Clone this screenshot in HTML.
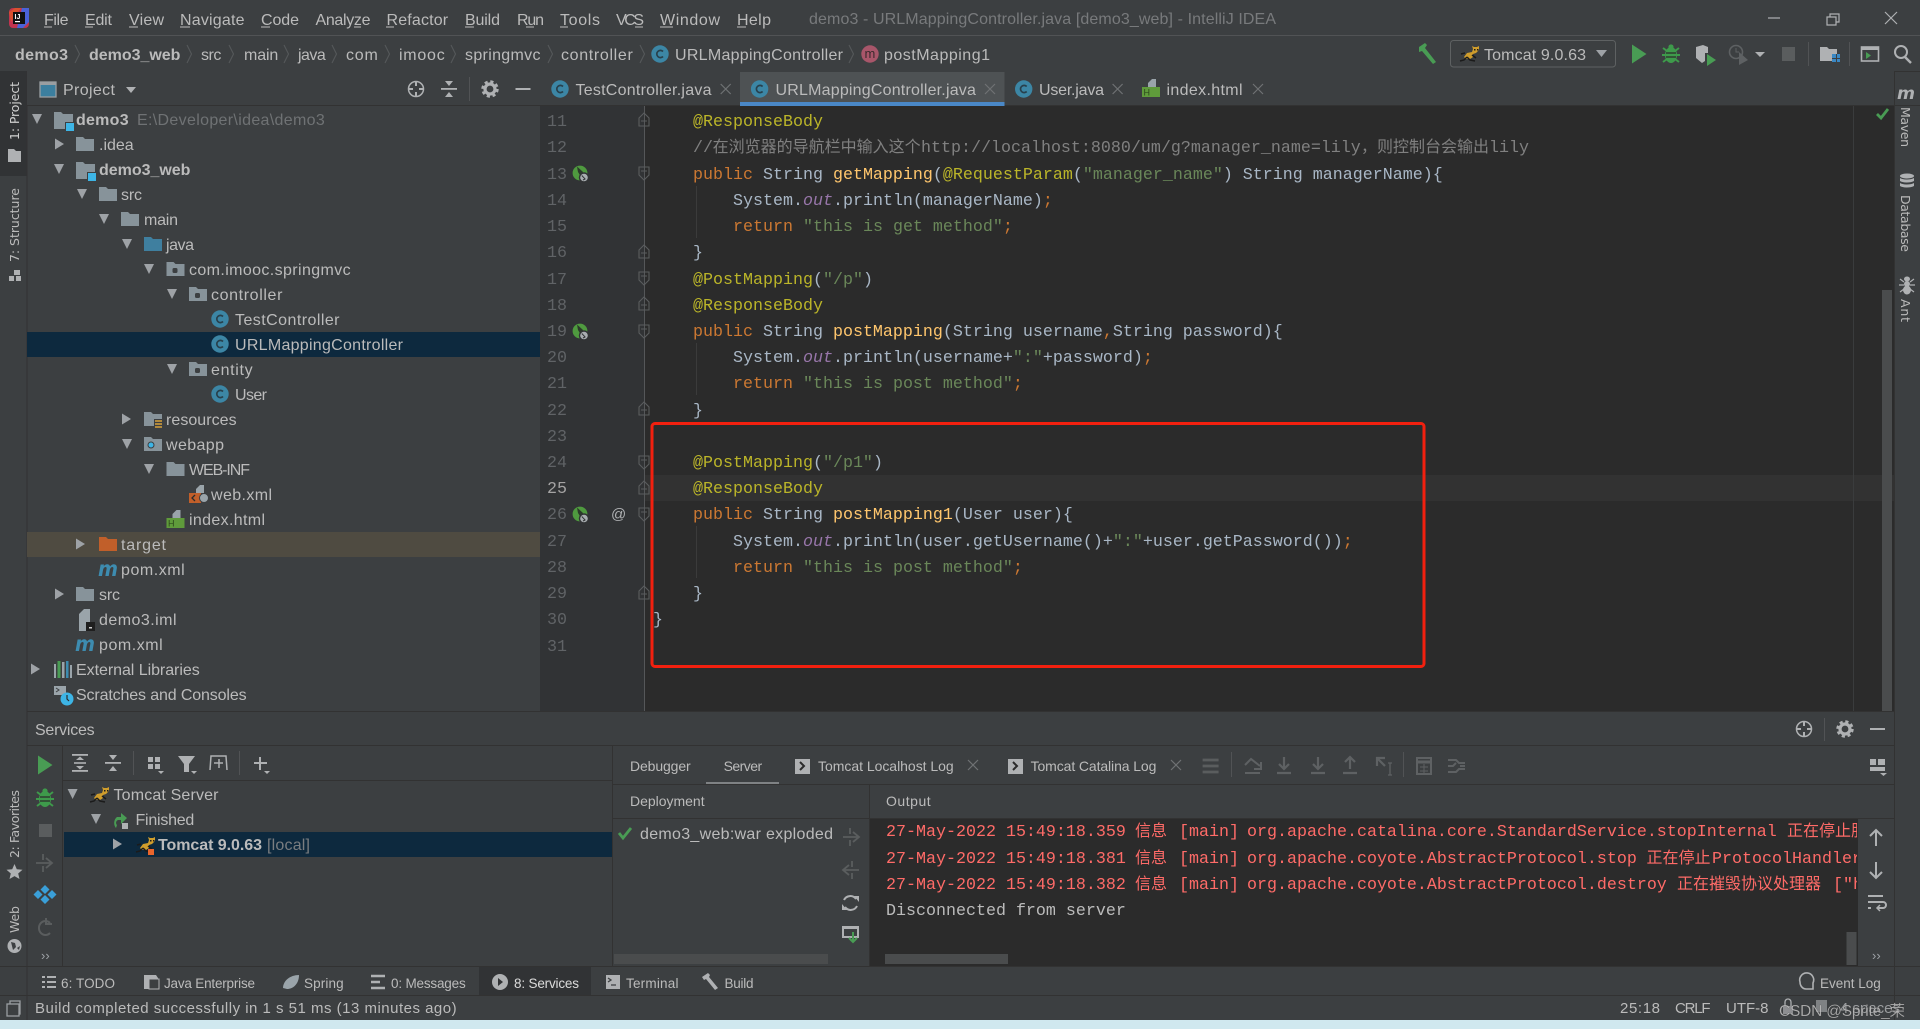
<!DOCTYPE html>
<html><head><meta charset="utf-8"><title>IntelliJ IDEA</title>
<style>
html,body{margin:0;padding:0;background:#3c3f41;overflow:hidden}
svg{display:block}
text{white-space:pre}
.u{font-family:"Liberation Sans","Noto Sans CJK SC",sans-serif;font-size:16px;fill:#bbbbbb}
.b{font-weight:bold}
.c{font-family:"Liberation Mono","Noto Sans CJK SC",monospace;font-size:16.667px;fill:#a9b7c6}
.cj{font-size:16px}
.k{fill:#cc7832}.s{fill:#6a8759}.m{fill:#ffc66d}.a{fill:#bbb529}.o{fill:#9876aa;font-style:italic}.g{fill:#808080}
.n{font-family:"Liberation Mono",monospace;font-size:16.667px;fill:#606366}
.l{font-family:"Liberation Mono","Noto Sans CJK SC",monospace;font-size:16.667px;fill:#ff6b68}
.v{font-family:"DejaVu Sans",sans-serif;font-size:12.5px;fill:#bbbbbb}
.t{font-size:14px}
.d{font-size:13.5px}
</style></head><body>
<svg width="1920" height="1029" viewBox="0 0 1920 1029" xmlns="http://www.w3.org/2000/svg">
<defs>
<clipPath id="logclip"><rect x="870" y="818" width="987" height="148"/></clipPath>
<path id="f" d="M-9-7h7l2 2h9v12h-18z" fill="#87939a"/>
<path id="fb" d="M-9-7h7l2 2h9v12h-18z" fill="#3f7f9f"/>
<path id="fo" d="M-9-7h7l2 2h9v12h-18z" fill="#c15f2a"/>
<g id="fp"><use href="#f"/><rect x="-3" y="-1" width="5" height="5" rx="1.5" fill="#3c3f41"/></g>
<g id="fm"><path d="M-10-8h7l2 2h10v8h-8v7h-11z" fill="#87939a"/><rect x="2" y="3" width="8" height="8" fill="#3db5e6"/></g>
<g id="fr"><use href="#f"/><rect x="1" y="0" width="9" height="9" fill="#3c3f41"/><path d="M2 2h7M2 5h7M2 8h7" stroke="#d8a23a" stroke-width="1.6"/></g>
<g id="fw"><use href="#f"/><circle cx="-2" cy="1" r="3" fill="#3db5e6" stroke="#3c3f41"/></g>
<g id="cl"><circle r="8.7" fill="#3c86a5"/><path d="M3-2.5A3.6 3.6 0 1 0 3 2.5" fill="none" stroke="#28404c" stroke-width="1.7"/></g>
<g id="mi"><circle r="8.7" fill="#a8566a"/><text x="-5.5" y="4" font-family="Liberation Sans" font-size="13" fill="#3a2a2e">m</text></g>
<g id="ht"><path d="M-3-1v-4l4-4h4v8z" fill="#9aa4aa"/><rect x="-9" y="-1" width="18" height="10" fill="#5f9b3b"/><text x="-7.5" y="7.5" font-family="Liberation Sans" font-size="9" fill="#2c4a1c">H</text></g>
<g id="xm"><path d="M-2-1v-4l4-4h4v8z" fill="#9aa4aa"/><rect x="-9" y="-1" width="12" height="10" fill="#c15f2a"/><path d="M-3 1l-3 3 3 3" fill="none" stroke="#2b2b2b" stroke-width="1.3"/><circle cx="6" cy="4" r="4.5" fill="#9aa4aa" stroke="#3c3f41"/></g>
<path id="ad" d="M-5-5h10l-5 10z" fill="#9ea2a6"/>
<path id="ar" d="M-4-5.5l9 5.5-9 5.5z" fill="#9ea2a6"/>
<path id="ch" d="M0-9L4.5 0 0 9" stroke="#55585a" stroke-width="1.1" fill="none"/>
<path id="xx" d="M-5-5L5 5M5-5L-5 5" stroke="#6f7274" stroke-width="1.2" fill="none"/>
<g id="cr" fill="none" stroke="#afb1b3"><circle r="7.5" stroke-width="1.5"/><path d="M0-8v5M0 3v5M-8 0h5M3 0h5" stroke-width="2"/></g>
<g id="ge"><circle r="5" fill="none" stroke="#afb1b3" stroke-width="3.2"/><circle r="7.5" fill="none" stroke="#afb1b3" stroke-width="2.4" stroke-dasharray="3.2 2.7"/></g>
<path id="mn" d="M-7.5 0h15" stroke="#afb1b3" stroke-width="2"/>
<g id="co" fill="#afb1b3"><rect x="-8" y="-1" width="16" height="1.8"/><path d="M-4-8h8l-4 5zM-4 8h8l-4-5z"/></g>
<g id="ex" fill="#afb1b3"><rect x="-8" y="-9" width="16" height="1.8"/><rect x="-8" y="7" width="16" height="1.8"/><rect x="-6" y="-.8" width="12" height="1.6"/><path d="M-4-3h8l-4-3.5zM-4 3h8l-4 3.500z"/></g>
<g id="to"><path d="M-5 3l3-4 5-1 1-3-1-3 2 1h3l2-1v4l-3 3-3 1v3l-3 2-4 0z" fill="#cf9d2c"/><path d="M-9 7l4-1 3-3M-2 3l3 3 5 1M3 1l4 3M-4-1l-4 1" stroke="#1b1b1b" stroke-width="1.500" fill="none"/><path d="M5-5h1.500v1.500H5zM8-5h1.500v1.500H8z" fill="#1b1b1b"/></g>
<g id="ru"><circle r="7.4" fill="#4f9a3f"/><path d="M-3-6.500L3-1l-2 5-3-5z" fill="#2b3a2a"/><circle cx="4" cy="4.500" r="5.200" fill="#313335"/><circle cx="4" cy="4.500" r="3.800" fill="#a8adb0"/><path d="M1.800 2.500l3.600 3.800M3 7l2-1" stroke="#313335" fill="none"/></g>
<g id="fu" fill="none" stroke="#5a5d5e" stroke-width="1.1"><path d="M-5-2L0-7l5 5v8h-10zM-3 1h6"/></g>
<g id="fd" fill="none" stroke="#5a5d5e" stroke-width="1.1"><path d="M-5-6h10v8L0 7l-5-5zM-3-2h6"/></g>
<g id="bug" fill="#3e9a4b"><ellipse rx="6" ry="8" cy="1"/><circle cy="-7" r="2.600"/><path d="M-8-6l4 3M8-6l-4 3M-9 1h4M9 1h-4M-8 8l4-3M8 8l-4-3" stroke="#3e9a4b" stroke-width="2"/><path d="M-5-1h10M-5 3h10" stroke="#2f3c30" stroke-width="1.400"/></g>
<path id="pl" d="M-7-9.500L7.500 0-7 9.500z" fill="#499c54"/>
<g id="scr" fill="#5a5d5e"><path d="M-8-6h16M-8 0h16M-8 6h16" stroke="#5a5d5e" stroke-width="2.800"/></g>
<g id="dn" fill="none" stroke="#5e6163" stroke-width="2.200"><path d="M-7 8h14M0-8V4M-5-1l5 5 5-5"/></g>
<g id="up" fill="none" stroke="#5e6163" stroke-width="2.200"><path d="M-7 8h14M0 4V-8M-5-3l5-5 5 5"/></g>
</defs>

<!-- base -->
<rect width="1920" height="1029" fill="#3c3f41"/>
<rect x="0" y="35" width="1920" height="1" fill="#515355"/>
<rect x="0" y="71" width="1920" height="1" fill="#323232"/>
<rect x="0" y="1020" width="1920" height="9" fill="#d0e8ef"/>

<!-- logo -->
<rect x="9" y="8" width="20" height="20" rx="4" fill="#c0344f"/>
<path d="M22 8h7v14l-6 6h-6z" fill="#4a62d8"/><path d="M9 12l6-4h6l-10 14z" fill="#d9502f"/>
<rect x="13" y="12" width="12" height="12" fill="#111"/><rect x="15" y="21" width="5" height="1.200" fill="#fff"/>
<text x="14.500" y="19" font-family="Liberation Sans" font-size="7" font-weight="bold" fill="#fff">IJ</text>

<!-- menu -->
<g class="u">
<text class="u" x="44" y="25" textLength="24.500">File</text><path d="M44 27h8" stroke="#bbb"/>
<text class="u" x="85" y="25" textLength="27">Edit</text><path d="M85 27h8" stroke="#bbb"/>
<text class="u" x="129" y="25" textLength="35">View</text><path d="M129 27h9" stroke="#bbb"/>
<text class="u" x="180" y="25" textLength="64.500">Navigate</text><path d="M180 27h10" stroke="#bbb"/>
<text class="u" x="261" y="25" textLength="38">Code</text><path d="M261 27h9" stroke="#bbb"/>
<text class="u" x="315.500" y="25" textLength="55">Analyze</text><path d="M354 27h7" stroke="#bbb"/>
<text class="u" x="386.500" y="25" textLength="61.600">Refactor</text><path d="M386 27h8" stroke="#bbb"/>
<text class="u" x="465" y="25" textLength="35">Build</text><path d="M465 27h9" stroke="#bbb"/>
<text class="u" x="517" y="25" textLength="27">Run</text><path d="M526 27h8" stroke="#bbb"/>
<text class="u" x="560" y="25" textLength="40">Tools</text><path d="M560 27h8" stroke="#bbb"/>
<text class="u" x="616" y="25" textLength="28">VCS</text><path d="M635 27h8" stroke="#bbb"/>
<text class="u" x="660" y="25" textLength="60">Window</text><path d="M660 27h13" stroke="#bbb"/>
<text class="u" x="737" y="25" textLength="34">Help</text><path d="M737 27h9" stroke="#bbb"/>
</g>
<text class="u" x="809" y="24" textLength="467" style="fill:#787a7c">demo3 - URLMappingController.java [demo3_web] - IntelliJ IDEA</text>
<path d="M1768 18h12" stroke="#afb1b3" stroke-width="1.200"/>
<path d="M1827 17h9v8h-9zM1830 17v-3h9v8h-3" fill="none" stroke="#afb1b3" stroke-width="1.200"/>
<path d="M1885 12l12 12M1897 12l-12 12" stroke="#afb1b3" stroke-width="1.200"/>

<!-- breadcrumb -->
<text class="u b" x="15" y="60" textLength="53">demo3</text><use href="#ch" x="75" y="54"/>
<text class="u b" x="89" y="60" textLength="91.400">demo3_web</text><use href="#ch" x="187" y="54"/>
<text class="u" x="201" y="60" textLength="20.400">src</text><use href="#ch" x="229" y="54"/>
<text class="u" x="244" y="60" textLength="34.300">main</text><use href="#ch" x="284" y="54"/>
<text class="u" x="298" y="60" textLength="27.800">java</text><use href="#ch" x="332" y="54"/>
<text class="u" x="346" y="60" textLength="31.800">com</text><use href="#ch" x="385" y="54"/>
<text class="u" x="399" y="60" textLength="45.700">imooc</text><use href="#ch" x="451" y="54"/>
<text class="u" x="465" y="60" textLength="75.500">springmvc</text><use href="#ch" x="548" y="54"/>
<text class="u" x="561" y="60" textLength="71.800">controller</text><use href="#ch" x="640" y="54"/>
<use href="#cl" x="660" y="54"/>
<text class="u" x="675" y="60" textLength="168">URLMappingController</text><use href="#ch" x="849" y="54"/>
<use href="#mi" x="870" y="54"/>
<text class="u" x="884" y="60" textLength="106">postMapping1</text>

<!-- right toolbar -->
<path d="M1419 47l6-4 2 2-2 3 11 14-3 2-11-13-3 1z" fill="#499c54"/>
<rect x="1450.500" y="40.500" width="165" height="26.500" rx="3" fill="#3c3f41" stroke="#5e6162"/>
<use href="#to" x="1469" y="54"/>
<text class="u" x="1484" y="60" textLength="102">Tomcat 9.0.63</text>
<path d="M1596 50h11l-5.500 7z" fill="#9ea2a6"/>
<use href="#pl" x="1639" y="54"/>
<use href="#bug" x="1671" y="54"/>
<path d="M1696 47l7-2 5 2v6h-3v8l-3 2-6-5z" fill="#afb1b3"/><path d="M1707 54l9 6-9 6z" fill="#499c54"/>
<circle cx="1736" cy="52" r="6.500" fill="none" stroke="#5e6163" stroke-width="1.600"/><path d="M1736 48v4h3" stroke="#5e6163" fill="none"/><path d="M1739 52l9 8-9 5z" fill="#5e6163"/>
<path d="M1755 52h10l-5 5z" fill="#afb1b3"/>
<rect x="1782" y="47" width="13" height="14" fill="#5a5d5e"/>
<rect x="1808" y="42" width="1" height="24" fill="#515355"/>
<path d="M1820 47h7l2 2h8v5h-5v7h-12z" fill="#afb1b3"/><path d="M1832 54h4v4h-4zM1837 54h3v4h-3zM1832 59h4v3h-4zM1837 59h3v3h-3z" fill="#3a88c4"/>
<rect x="1849" y="42" width="1" height="24" fill="#515355"/>
<rect x="1861.500" y="47" width="17" height="14" fill="none" stroke="#afb1b3" stroke-width="1.600"/><rect x="1861" y="47" width="18" height="3" fill="#afb1b3"/><path d="M1866 52l5 3.500-5 3.500z" fill="#499c54"/>
<circle cx="1901" cy="52" r="6" fill="none" stroke="#afb1b3" stroke-width="2"/><path d="M1905 57l6 6" stroke="#afb1b3" stroke-width="2.400"/>

<!-- left stripe -->
<rect x="0" y="71" width="26.500" height="105" fill="#313335"/>
<rect x="26.500" y="71" width="1" height="949" fill="#323232"/>
<text class="v" transform="translate(19,140) rotate(-90)" textLength="58" style="fill:#d0d0d0">1: Project</text>
<path d="M8 149h6l2 2h5v11h-13z" fill="#afb1b3"/>
<text class="v" transform="translate(19,262) rotate(-90)" textLength="74">7: Structure</text>
<path d="M9 276h5v5h-5zM16 276h5v5h-5zM14 270h6v5h-6z" fill="#afb1b3"/>
<text class="v" transform="translate(19,858) rotate(-90)" textLength="68">2: Favorites</text>
<path d="M14.500 864l2.300 5.200 5.700.6-4.300 3.700 1.300 5.500-5-2.900-5 2.900 1.300-5.500-4.300-3.700 5.700-.6z" fill="#afb1b3"/>
<text class="v" transform="translate(19,933) rotate(-90)" textLength="27">Web</text>
<circle cx="14.500" cy="946" r="7" fill="#afb1b3"/><path d="M11 942l4 1 1 4-3 3zM17 948l3-2-1 4z" fill="#3c3f41"/>

<!-- project panel toolbar -->
<rect x="27" y="71" width="513" height="34" fill="#3c3f41"/>
<rect x="27" y="105" width="1893" height="1" fill="#323232"/>
<rect x="40" y="82" width="16" height="15" fill="#3c7f9f" stroke="#9a9ea1" stroke-width="1.300"/><rect x="40" y="82" width="16" height="3" fill="#9a9ea1"/>
<text class="u" x="63" y="95" textLength="52">Project</text>
<path d="M126 87h10l-5 6z" fill="#afb1b3"/>
<use href="#cr" x="416" y="89"/><use href="#co" x="449" y="89"/>
<rect x="469" y="77" width="1" height="24" fill="#515355"/>
<use href="#ge" x="490" y="89"/><use href="#mn" x="523" y="89"/>

<!-- tree -->
<rect x="27" y="332" width="513" height="25" fill="#0d293e"/>
<rect x="27" y="532" width="513" height="25" fill="#4f4b41"/>
<use href="#ad" x="37" y="119"/><use href="#fm" x="64" y="120"/>
<text class="u b" x="76" y="125" textLength="52.600">demo3</text><text class="u" x="137" y="125" textLength="187.800" style="fill:#6f7274">E:\Developer\idea\demo3</text>
<use href="#ar" x="59" y="144"/><use href="#f" x="85" y="144"/><text class="u" x="99" y="150" textLength="34.700">.idea</text>
<use href="#ad" x="59" y="169"/><use href="#fm" x="86" y="170"/><text class="u b" x="99" y="175" textLength="91.400">demo3_web</text>
<use href="#ad" x="82" y="194"/><use href="#f" x="108" y="194"/><text class="u" x="121" y="200" textLength="21">src</text>
<use href="#ad" x="104" y="219"/><use href="#f" x="130" y="219"/><text class="u" x="144" y="225" textLength="34">main</text>
<use href="#ad" x="127" y="244"/><use href="#fb" x="153" y="244"/><text class="u" x="166" y="250" textLength="28">java</text>
<use href="#ad" x="149" y="269"/><use href="#fp" x="175.500" y="269"/><text class="u" x="189" y="275" textLength="161.600">com.imooc.springmvc</text>
<use href="#ad" x="172" y="294"/><use href="#fp" x="198" y="294"/><text class="u" x="211" y="300" textLength="71.400">controller</text>
<use href="#cl" x="220" y="319"/><text class="u" x="235" y="325" textLength="104.500">TestController</text>
<use href="#cl" x="220" y="344"/><text class="u" x="235" y="350" textLength="168">URLMappingController</text>
<use href="#ad" x="172" y="369"/><use href="#fp" x="198" y="369"/><text class="u" x="211" y="375" textLength="41.600">entity</text>
<use href="#cl" x="220" y="394"/><text class="u" x="235" y="400" textLength="32">User</text>
<use href="#ar" x="126" y="419"/><use href="#fr" x="153" y="419"/><text class="u" x="166" y="425" textLength="70.600">resources</text>
<use href="#ad" x="127" y="444"/><use href="#fw" x="153" y="444"/><text class="u" x="166" y="450" textLength="58">webapp</text>
<use href="#ad" x="149" y="469"/><use href="#f" x="175.500" y="469"/><text class="u" x="189" y="475" textLength="61">WEB-INF</text>
<use href="#xm" x="198" y="494"/><text class="u" x="211" y="500" textLength="61">web.xml</text>
<use href="#ht" x="175.500" y="519"/><text class="u" x="189" y="525" textLength="76">index.html</text>
<use href="#ar" x="80" y="544"/><use href="#fo" x="108" y="544"/><text class="u" x="121" y="550" textLength="45">target</text>
<text x="98" y="576" font-family="DejaVu Sans" font-size="21" font-weight="bold" font-style="italic" fill="#3d8cb0" textLength="20" lengthAdjust="spacingAndGlyphs">m</text><text class="u" x="121" y="575" textLength="63.700">pom.xml</text>
<use href="#ar" x="59" y="594"/><use href="#f" x="85" y="594"/><text class="u" x="99" y="600" textLength="21">src</text>
<path d="M79 619v-5l5-5h6v14h5v8H79z" fill="#9aa4aa"/><rect x="86" y="622" width="9" height="9" fill="#1f1f1f"/><rect x="89" y="627" width="3" height="1.500" fill="#ccc"/><text class="u" x="99" y="625" textLength="77.500">demo3.iml</text>
<text x="75" y="651" font-family="DejaVu Sans" font-size="21" font-weight="bold" font-style="italic" fill="#3d8cb0" textLength="20" lengthAdjust="spacingAndGlyphs">m</text><text class="u" x="99" y="650" textLength="63.700">pom.xml</text>
<use href="#ar" x="35" y="669"/>
<g><rect x="54" y="664" width="2" height="14" fill="#9aa4aa"/><rect x="57.500" y="661" width="3" height="17" fill="#499c54"/><rect x="62" y="662" width="2.500" height="16" fill="#9aa4aa"/><rect x="66" y="661" width="2.500" height="17" fill="#3d8cb0"/><rect x="70" y="665" width="2" height="13" fill="#9aa4aa"/></g>
<text class="u" x="76" y="675" textLength="123.700">External Libraries</text>
<path d="M54 686h12v9h-12z" fill="#9aa4aa"/><path d="M56 688l3 2-3 2" fill="none" stroke="#3c3f41"/><circle cx="67" cy="699" r="6.500" fill="#3db5e6"/><path d="M67 695v4l2 2" fill="none" stroke="#2b2b2b" stroke-width="1.200"/>
<text class="u" x="76" y="700" textLength="170.600">Scratches and Consoles</text>
<rect x="27" y="711" width="1867" height="1" fill="#323232"/>

<!-- editor tabs -->
<rect x="540" y="71" width="1354" height="34" fill="#3c3f41"/>
<rect x="540" y="105" width="1354" height="1" fill="#323232"/>
<use href="#cl" x="560" y="89"/><text class="u" x="575.500" y="95" textLength="136">TestController.java</text><use href="#xx" x="725.700" y="89"/>
<rect x="740" y="72" width="264.500" height="30" fill="#4e5254"/><rect x="740" y="102" width="264.500" height="4" fill="#4a88c7"/>
<use href="#cl" x="759.600" y="89"/><text class="u" x="775.500" y="95" textLength="200.400">URLMappingController.java</text><use href="#xx" x="990" y="89"/>
<use href="#cl" x="1023.700" y="89"/><text class="u" x="1039" y="95" textLength="65">User.java</text><use href="#xx" x="1117.600" y="89"/>
<use href="#ht" x="1151" y="88"/><text class="u" x="1166.500" y="95" textLength="76">index.html</text><use href="#xx" x="1258" y="89"/>

<!-- editor -->
<rect x="540" y="106" width="104" height="605" fill="#313335"/>
<rect x="644" y="106" width="1250" height="605" fill="#2b2b2b"/>
<rect x="645" y="475" width="1249" height="26" fill="#323232"/>
<rect x="644" y="106" width="1" height="605" fill="#555759"/>
<rect x="1853" y="106" width="1" height="605" fill="#3a3c3d"/>
<rect x="1882" y="290" width="10" height="421" fill="#4a4c4d"/>
<path d="M1877 114l4 4 7-9" fill="none" stroke="#499c54" stroke-width="2.800"/>
<g>
<rect x="696" y="186" width="1" height="52" fill="#3b3b3b"/><rect x="696" y="343" width="1" height="52" fill="#3b3b3b"/><rect x="696" y="526" width="1" height="52" fill="#3b3b3b"/>
</g>
<!-- line numbers -->
<g>
<text class="n" x="547" y="126">11</text><text class="n" x="547" y="152">12</text><text class="n" x="547" y="179">13</text><text class="n" x="547" y="205">14</text><text class="n" x="547" y="231">15</text><text class="n" x="547" y="257">16</text><text class="n" x="547" y="284">17</text><text class="n" x="547" y="310">18</text><text class="n" x="547" y="336">19</text><text class="n" x="547" y="362">20</text><text class="n" x="547" y="388">21</text><text class="n" x="547" y="415">22</text><text class="n" x="547" y="441">23</text><text class="n" x="547" y="467">24</text><text class="n" x="547" y="493" style="fill:#a4a3a3">25</text><text class="n" x="547" y="519">26</text><text class="n" x="547" y="546">27</text><text class="n" x="547" y="572">28</text><text class="n" x="547" y="598">29</text><text class="n" x="547" y="624">30</text><text class="n" x="547" y="651">31</text>
</g>
<use href="#ru" x="580" y="173"/><use href="#ru" x="580" y="331"/><use href="#ru" x="580" y="514"/>
<text x="611" y="519" font-family="Liberation Sans" font-size="15" fill="#afb1b3">@</text>
<use href="#fu" x="644" y="120"/><use href="#fd" x="644" y="173"/><use href="#fu" x="644" y="252"/><use href="#fd" x="644" y="278"/><use href="#fu" x="644" y="304"/><use href="#fd" x="644" y="331"/><use href="#fu" x="644" y="409"/><use href="#fd" x="644" y="462"/><use href="#fu" x="644" y="488"/><use href="#fd" x="644" y="514"/><use href="#fu" x="644" y="593"/>
<!-- code -->
<text class="c a" x="693" y="126">@ResponseBody</text>
<text class="c g" y="152"><tspan x="693">//</tspan><tspan x="712.600" class="cj">在浏览器的导航栏中输入这个</tspan><tspan x="921">http://localhost:8080/um/g?manager_name=lily</tspan><tspan x="1361" class="cj">，</tspan><tspan x="1377" class="cj">则控制台会输出</tspan><tspan x="1489">lily</tspan></text>
<text class="c" x="693" y="179"><tspan class="k">public</tspan> String <tspan class="m">getMapping</tspan>(<tspan class="a">@RequestParam</tspan>(<tspan class="s">"manager_name"</tspan>) String managerName){</text>
<text class="c" x="733" y="205">System.<tspan class="o">out</tspan>.println(managerName)<tspan class="k">;</tspan></text>
<text class="c" x="733" y="231"><tspan class="k">return</tspan> <tspan class="s">"this is get method"</tspan><tspan class="k">;</tspan></text>
<text class="c" x="693" y="257">}</text>
<text class="c" x="693" y="284"><tspan class="a">@PostMapping</tspan>(<tspan class="s">"/p"</tspan>)</text>
<text class="c a" x="693" y="310">@ResponseBody</text>
<text class="c" x="693" y="336"><tspan class="k">public</tspan> String <tspan class="m">postMapping</tspan>(String username<tspan class="k">,</tspan>String password){</text>
<text class="c" x="733" y="362">System.<tspan class="o">out</tspan>.println(username+<tspan class="s">":"</tspan>+password)<tspan class="k">;</tspan></text>
<text class="c" x="733" y="388"><tspan class="k">return</tspan> <tspan class="s">"this is post method"</tspan><tspan class="k">;</tspan></text>
<text class="c" x="693" y="415">}</text>
<text class="c" x="693" y="467"><tspan class="a">@PostMapping</tspan>(<tspan class="s">"/p1"</tspan>)</text>
<text class="c a" x="693" y="493">@ResponseBody</text>
<text class="c" x="693" y="519"><tspan class="k">public</tspan> String <tspan class="m">postMapping1</tspan>(User user){</text>
<text class="c" x="733" y="546">System.<tspan class="o">out</tspan>.println(user.getUsername()+<tspan class="s">":"</tspan>+user.getPassword())<tspan class="k">;</tspan></text>
<text class="c" x="733" y="572"><tspan class="k">return</tspan> <tspan class="s">"this is post method"</tspan><tspan class="k">;</tspan></text>
<text class="c" x="693" y="598">}</text>
<text class="c" x="653" y="624">}</text>
<!-- red annotation -->
<rect x="652" y="423.500" width="772" height="243" rx="3" fill="none" stroke="#f2200f" stroke-width="3"/>

<!-- right stripe -->
<rect x="1894" y="71" width="1" height="949" fill="#323232"/>
<text x="1897" y="99" font-family="DejaVu Sans" font-size="17" font-weight="bold" font-style="italic" fill="#afb1b3" textLength="18" lengthAdjust="spacingAndGlyphs">m</text>
<text class="v" transform="translate(1901,107) rotate(90)" textLength="40">Maven</text>
<g fill="#afb1b3"><ellipse cx="1907" cy="176" rx="7" ry="2.500"/><path d="M1900 178c3 2 11 2 14 0v3c-3 2-11 2-14 0zM1900 183c3 2 11 2 14 0v3c-3 2-11 2-14 0z"/></g>
<text class="v" transform="translate(1901,195) rotate(90)" textLength="57">Database</text>
<g fill="#afb1b3"><ellipse cx="1907" cy="279" rx="3" ry="2.500"/><ellipse cx="1907" cy="284" rx="3" ry="3"/><ellipse cx="1907" cy="290" rx="4" ry="4.500"/><path d="M1900 279l4 3M1914 279l-4 3M1899 285h5M1915 285h-5M1900 292l4-3M1914 292l-4-3" stroke="#afb1b3" stroke-width="1.200"/></g>
<text class="v" transform="translate(1901,299) rotate(90)" textLength="23">Ant</text>

<!-- services header -->
<text class="u" x="35" y="735" textLength="59.600">Services</text>
<rect x="27" y="745" width="1867" height="1" fill="#323232"/>
<use href="#cr" x="1804" y="729"/><rect x="1824" y="718" width="1" height="23" fill="#515355"/><use href="#ge" x="1845" y="729"/><use href="#mn" x="1877.500" y="729"/>
<!-- services left column -->
<rect x="62" y="746" width="1" height="220" fill="#323232"/>
<use href="#pl" x="45" y="765"/>
<use href="#bug" x="45" y="798"/>
<rect x="39" y="824" width="13" height="13" fill="#5a5d5e"/>
<path d="M36 863h15M46 858l6 5-6 5M43 854v6M43 866v6" fill="none" stroke="#5a5d5e" stroke-width="1.800"/>
<path d="M45 886l4.500 4.500-4.500 4.500-4.500-4.500zM38 891l4.500 4.500L38 900l-4.500-4.500zM52 891l4.500 4.500L52 900l-4.500-4.500zM45 896l4.500 4.500-4.500 4.500-4.500-4.500z" fill="#3a9fd8" transform="translate(0,-1)"/>
<path d="M50 923a6.500 7 0 1 0 0 10M46 918v6h6" fill="none" stroke="#5a5d5e" stroke-width="2"/>
<text class="u" x="41" y="960" style="font-size:13px;fill:#9ea2a6">››</text>
<!-- services toolbar -->
<use href="#ex" x="80" y="763"/><use href="#co" x="113" y="763"/><rect x="133" y="751" width="1" height="24" fill="#515355"/>
<path d="M148 757h5v5h-5zM155 757h5v5h-5zM148 764h5v5h-5zM155 764h5v5h-5z" fill="#afb1b3"/><path d="M158 771h6l-3 3z" fill="#afb1b3"/>
<path d="M178 756h17l-6 8v8h-5v-8z" fill="#afb1b3"/><path d="M191 771h6l-3 3z" fill="#afb1b3"/>
<path d="M210 770l1-14h15l1 14M219 759v9M214 763h9" fill="none" stroke="#afb1b3" stroke-width="1.500"/>
<rect x="239" y="751" width="1" height="24" fill="#515355"/>
<path d="M254 763h13M260 757v13" stroke="#afb1b3" stroke-width="2"/><path d="M264 771h6l-3 3z" fill="#afb1b3"/>
<rect x="63" y="780" width="549" height="1" fill="#323232"/>
<!-- services tree -->
<rect x="64" y="832" width="548" height="25" fill="#0d293e"/>
<use href="#ad" x="72.600" y="794"/><use href="#to" x="99" y="795"/><text class="u" x="113.500" y="800" textLength="105">Tomcat Server</text>
<use href="#ad" x="96" y="819"/>
<path d="M116 828a6 7 0 0 1 1-11h4v-4l6 5-6 6v-4h-3a3 3 0 0 0-1 5z" fill="#499c54"/><rect x="122" y="823" width="6" height="6" fill="#afb1b3"/>
<text class="u" x="135.500" y="825" textLength="58.800">Finished</text>
<use href="#ar" x="117" y="844"/><use href="#to" x="145" y="845"/><rect x="148" y="849" width="6" height="6" fill="#e8652c"/>
<text class="u b" x="158" y="850" textLength="104">Tomcat 9.0.63</text><text class="u" x="267" y="850" textLength="43" style="fill:#7a7d80">[local]</text>
<!-- right services -->
<rect x="612" y="746" width="1" height="220" fill="#323232"/>
<text class="u t" x="630" y="771" textLength="60.700">Debugger</text>
<text class="u t" x="723.600" y="771" textLength="38.600">Server</text>
<rect x="706" y="782" width="73" height="3" fill="#7f8284"/>
<rect x="795" y="759" width="15" height="15" fill="#afb1b3"/><path d="M800 762l4 4-4 4" fill="none" stroke="#2b2b2b" stroke-width="2"/>
<text class="u t" x="818" y="771" textLength="135.700">Tomcat Localhost Log</text><use href="#xx" x="973" y="765"/>
<rect x="1008" y="759" width="15" height="15" fill="#afb1b3"/><path d="M1013 762l4 4-4 4" fill="none" stroke="#2b2b2b" stroke-width="2"/>
<text class="u t" x="1030.600" y="771" textLength="125.800">Tomcat Catalina Log</text><use href="#xx" x="1176" y="765"/>
<use href="#scr" x="1210.600" y="766"/>
<rect x="1231" y="752" width="1" height="25" fill="#515355"/>
<path d="M1245 773h15M1245 765l6-6 9 7M1261 762v7h-7" fill="none" stroke="#5e6163" stroke-width="2"/>
<use href="#dn" x="1284" y="765"/><use href="#dn" x="1318" y="765"/><use href="#up" x="1350" y="765"/>
<path d="M1377 758l8 8M1377 766v-8h8" fill="none" stroke="#5e6163" stroke-width="2.200"/><path d="M1388 763h4M1390 763v12M1388 775h4" fill="none" stroke="#5e6163" stroke-width="1.300"/>
<rect x="1403" y="752" width="1" height="25" fill="#515355"/>
<rect x="1417" y="758" width="14" height="16" fill="none" stroke="#5e6163" stroke-width="2"/><path d="M1417 762h14" stroke="#5e6163" stroke-width="3"/><path d="M1420 767h8M1420 771h8M1424 764v10" stroke="#5e6163"/>
<path d="M1448 760h8l3 3h6M1448 766h5l3-3M1448 772h8l3-3h6M1460 766h5" fill="none" stroke="#5e6163" stroke-width="2"/>
<path d="M1870 759h6v6h-6zM1878 759h7v6h-7zM1870 767h15v4h-15z" fill="#afb1b3"/><path d="M1880 773h7l-3.500 3z" fill="#afb1b3"/>
<rect x="613" y="784" width="1281" height="1" fill="#323232"/>
<text class="u t" x="630" y="806" textLength="74.600">Deployment</text>
<text class="u t" x="886" y="806" textLength="44.700">Output</text>
<rect x="613" y="818" width="1281" height="1" fill="#323232"/>
<rect x="869" y="785" width="1" height="181" fill="#323232"/>
<rect x="870" y="819" width="988" height="147" fill="#2b2b2b"/>
<!-- deployment -->
<path d="M619 833l4 5 8-10" fill="none" stroke="#499c54" stroke-width="2.800"/>
<text class="u" x="640" y="839" textLength="193">demo3_web:war exploded</text>
<g fill="none" stroke="#5a5d5e" stroke-width="1.800"><path d="M843 837h15M853 832l6 5-6 5M850 828v6M850 840v6"/><path d="M859 870h-15M849 865l-6 5 6 5M852 861v6M852 873v6"/></g>
<g fill="none" stroke="#afb1b3" stroke-width="2"><path d="M844 900a7 7 0 0 1 12-1M857 906a7 7 0 0 1-12 1"/></g><path d="M854 896l5 0 0 6zM847 910l-5 0 0-6z" fill="#afb1b3"/>
<rect x="843" y="927" width="15" height="10" fill="#3c3f41" stroke="#afb1b3" stroke-width="2"/><rect x="843" y="926" width="15" height="3" fill="#afb1b3"/>
<path d="M853 932v9M849 938l4 4 4-4" fill="none" stroke="#499c54" stroke-width="2"/>
<rect x="614" y="954" width="214" height="10" fill="#4a4c4d"/>
<!-- output log -->
<g clip-path="url(#logclip)">
<text class="l" y="836"><tspan x="886">27-May-2022 15:49:18.359</tspan><tspan x="1135" class="cj">信息</tspan><tspan x="1179">[main]</tspan><tspan x="1247">org.apache.catalina.core.StandardService.stopInternal</tspan><tspan x="1787" class="cj">正在停止服务</tspan></text>
<text class="l" y="863"><tspan x="886">27-May-2022 15:49:18.381</tspan><tspan x="1135" class="cj">信息</tspan><tspan x="1179">[main]</tspan><tspan x="1247">org.apache.coyote.AbstractProtocol.stop</tspan><tspan x="1646.500" class="cj">正在停止</tspan><tspan x="1712">ProtocolHandler</tspan></text>
<text class="l" y="889"><tspan x="886">27-May-2022 15:49:18.382</tspan><tspan x="1135" class="cj">信息</tspan><tspan x="1179">[main]</tspan><tspan x="1247">org.apache.coyote.AbstractProtocol.destroy</tspan><tspan x="1677" class="cj">正在摧毁协议处理器</tspan><tspan x="1833">["http-nio-8080"]</tspan></text>
</g>
<text class="c" x="886" y="915" style="fill:#bbbbbb">Disconnected from server</text>
<rect x="885" y="954" width="123" height="10" fill="#4a4c4d"/>
<rect x="1846.500" y="932" width="10" height="33" fill="#4a4c4d"/>
<!-- right console actions -->
<g fill="none" stroke="#afb1b3" stroke-width="2"><path d="M1876 846v-15M1870 836l6-6 6 6"/><path d="M1876 862v15M1870 872l6 6 6-6"/><path d="M1868 896h15M1868 902h15a3 3 0 0 1 0 6h-5M1868 908h3"/><path d="M1880 905l-3 3 3 3" stroke-width="1.500"/></g>
<text class="u" x="1872" y="960" style="font-size:13px;fill:#9ea2a6">››</text>

<!-- bottom stripes -->
<rect x="0" y="966" width="1920" height="1" fill="#323232"/>
<rect x="0" y="995" width="1920" height="1" fill="#323232"/>
<rect x="479" y="967" width="112" height="28" fill="#313335"/>
<path d="M42 977h3M47 977h9M42 982h3M47 982h9M42 987h3M47 987h9" stroke="#afb1b3" stroke-width="2"/>
<text class="u d" x="61" y="988" textLength="54">6: TODO</text>
<path d="M144 975h12l2 3v2h-7v9h-7z" fill="#afb1b3"/><rect x="149" y="979" width="10" height="10" fill="#3c3f41" stroke="#afb1b3"/>
<text class="u d" x="164" y="988" textLength="91">Java Enterprise</text>
<path d="M283 988c0-7 7-13 16-13 0 9-6 14-12 14z" fill="#9aa4aa"/>
<text class="u d" x="304" y="988" textLength="39.600">Spring</text>
<path d="M371 976h14M371 982h9M371 988h14" stroke="#afb1b3" stroke-width="2.400"/>
<text class="u d" x="391" y="988" textLength="74.700">0: Messages</text>
<circle cx="500" cy="982" r="8" fill="#afb1b3"/><path d="M498 978l5 4-5 4z" fill="#313335"/>
<text class="u d" x="514" y="988" textLength="65" style="fill:#dcdcdc">8: Services</text>
<rect x="606" y="975" width="14" height="14" fill="#afb1b3"/><path d="M608 978l3 2-3 2M611 985h5" fill="none" stroke="#3c3f41" stroke-width="1.300"/>
<text class="u d" x="626" y="988" textLength="52.500">Terminal</text>
<path d="M702 977l6-4 2 2-1 2 9 11-3 2-9-11-2 1z" fill="#afb1b3"/>
<text class="u d" x="724.500" y="988" textLength="29">Build</text>
<path d="M1813 989h-7a6 7 0 0 1-6-7 7 7 0 1 1 13 1z" fill="none" stroke="#afb1b3" stroke-width="1.600"/>
<text class="u d" x="1820" y="988" textLength="60.800">Event Log</text>
<!-- status -->
<rect x="10" y="1001" width="10" height="13" fill="none" stroke="#9a9ea1" stroke-width="1.300"/><rect x="7" y="1004" width="12" height="12" fill="#3c3f41" stroke="#9a9ea1" stroke-width="1.300"/>
<text class="u" x="35" y="1013" style="font-size:15px" textLength="421.600">Build completed successfully in 1 s 51 ms (13 minutes ago)</text>
<text class="u" x="1620" y="1013" style="font-size:15px" textLength="40">25:18</text>
<text class="u" x="1675" y="1013" style="font-size:15px" textLength="35.500">CRLF</text>
<text class="u" x="1726" y="1013" style="font-size:15px" textLength="42.500">UTF-8</text>
<rect x="1783" y="1006" width="10" height="8" fill="#afb1b3" opacity=".7"/><path d="M1785 1006v-4a3 3 0 0 1 6 0v4" fill="none" stroke="#afb1b3" stroke-width="1.300"/>
<rect x="1816" y="1000" width="11" height="12" fill="#7f8284"/>
<text class="u" x="1840" y="1013" style="font-size:15px;fill:#9a9c9e" textLength="60">4 spaces</text>
<text x="1779" y="1016" font-family="Liberation Sans,Noto Sans CJK SC,sans-serif" font-size="15.500" fill="#c8c8c8" fill-opacity=".85" stroke="#222" stroke-opacity=".35" stroke-width=".4" textLength="126">CSDN @Sprite_荣</text>
</svg>
</body></html>
